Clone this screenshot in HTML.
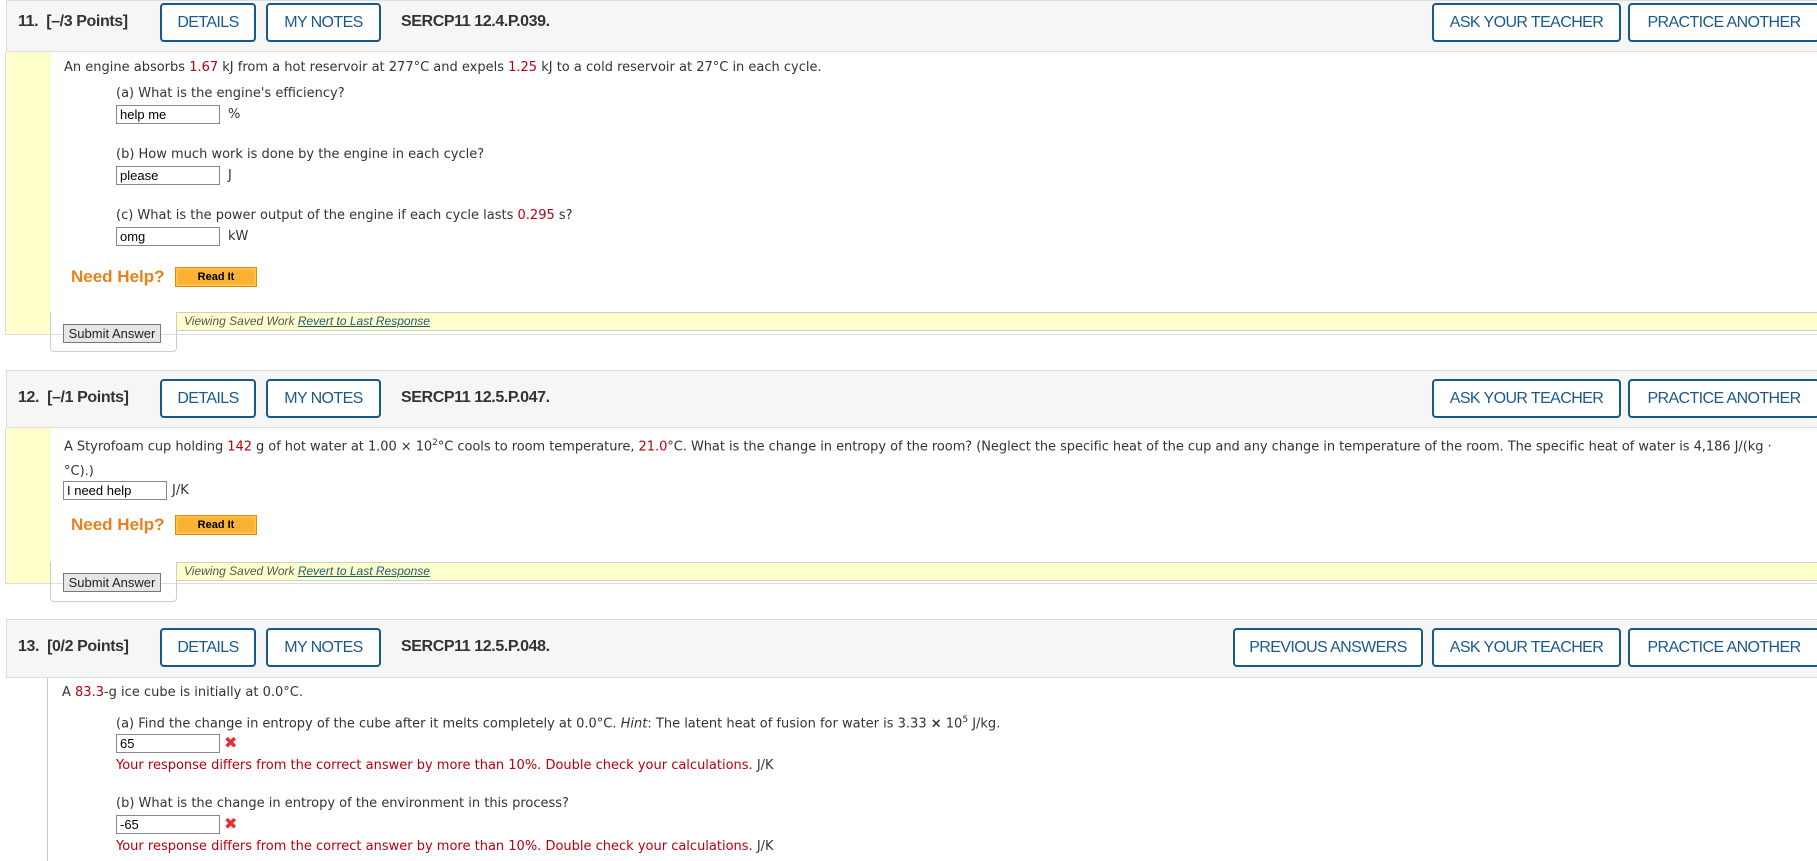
<!DOCTYPE html>
<html><head><meta charset="utf-8"><style>
*{margin:0;padding:0;box-sizing:border-box}
body{width:1817px;height:861px;overflow:hidden;background:#fff;position:relative;font-family:"DejaVu Sans",Verdana,sans-serif;font-size:13px;color:#333}
.a{position:absolute;white-space:nowrap}
.hdr{position:absolute;left:6px;width:1811px;background:#f6f6f6;border:1px solid #ddd;border-right:none}
.btn{position:absolute;border:2px solid #155a8a;border-radius:4px;background:#fff;color:#1a5a8a;font-family:"Liberation Sans",sans-serif;font-size:16px;display:flex;align-items:center;justify-content:center;letter-spacing:-0.6px}
.ht{position:absolute;font-family:"Liberation Sans",sans-serif;font-weight:bold;font-size:16px;color:#333;letter-spacing:-0.4px}
.yel{position:absolute;left:5px;width:46px;background:#ffffcc;border:1px solid #ddd;border-right:none;border-top:none}
.yb{position:absolute;left:51px;width:1766px;border-bottom:1px solid #ddd}
.r{color:#b8000d}
.inp{position:absolute;width:104px;height:19px;border:1px solid #888;font-family:"Liberation Sans",sans-serif;font-size:13px;padding-left:3px;line-height:17px;color:#000}
.nh{position:absolute;font-family:"Liberation Sans",sans-serif;font-weight:bold;font-size:17px;color:#e8811a}
.ri{position:absolute;width:82px;height:20px;background:#f9b233;border:1px solid #e08a10;box-shadow:inset 0 0 0 2px #fbc24a;font-family:"Liberation Sans",sans-serif;font-weight:bold;font-size:11px;color:#000;text-align:center;line-height:18px}
.vw{position:absolute;left:176px;width:1641px;height:19px;background:#ffffcc;border:1px solid #ccc;border-right:none;font-family:"Liberation Sans",sans-serif;font-style:italic;font-size:12px;color:#555;padding-left:7px;line-height:16px}
.vw u{color:#1a5a7a}
.sb{position:absolute;left:63px;width:98px;height:19px;background:#e6e6e6;border:1px solid #777;font-family:"Liberation Sans",sans-serif;font-size:13px;color:#222;text-align:center;line-height:17px}
.sbox{position:absolute;left:50px;width:127px;border:1px solid #ccc;border-top:none;border-radius:0 0 4px 4px}
.x{color:#e03030;font-weight:bold;font-size:16px}
</style></head><body>

<!-- Q11 -->
<div class="hdr" style="top:0;height:52px"></div>
<div class="ht" style="left:18px;top:13px">11.&nbsp; [–/3 Points]</div>
<div class="btn" style="left:160px;top:3px;width:96px;height:39px">DETAILS</div>
<div class="btn" style="left:266px;top:3px;width:115px;height:39px">MY NOTES</div>
<div class="ht" style="left:401px;top:13px">SERCP11 12.4.P.039.</div>
<div class="btn" style="left:1432px;top:3px;width:189px;height:39px">ASK YOUR TEACHER</div>
<div class="btn" style="left:1628px;top:3px;width:192px;height:39px">PRACTICE ANOTHER</div>
<div class="yel" style="top:52px;height:283px"></div>
<div class="yb" style="top:52px;height:283px"></div>
<div class="sbox" style="top:312px;height:40px"></div>
<div class="a" style="left:64px;top:60px">An engine absorbs <span class="r">1.67</span> kJ from a hot reservoir at 277°C and expels <span class="r">1.25</span> kJ to a cold reservoir at 27°C in each cycle.</div>
<div class="a" style="left:116px;top:86px">(a) What is the engine's efficiency?</div>
<div class="inp" style="left:116px;top:105px">help me</div><div class="a" style="left:228px;top:107px">%</div>
<div class="a" style="left:116px;top:147px">(b) How much work is done by the engine in each cycle?</div>
<div class="inp" style="left:116px;top:166px">please</div><div class="a" style="left:228px;top:168px">J</div>
<div class="a" style="left:116px;top:208px">(c) What is the power output of the engine if each cycle lasts <span class="r">0.295</span> s?</div>
<div class="inp" style="left:116px;top:227px">omg</div><div class="a" style="left:228px;top:229px">kW</div>
<div class="nh" style="left:71px;top:267px">Need Help?</div>
<div class="ri" style="left:175px;top:267px">Read It</div>
<div class="vw" style="top:312px">Viewing Saved Work <u>Revert to Last Response</u></div>
<div class="sb" style="top:324px">Submit Answer</div>

<!-- Q12 -->
<div class="hdr" style="top:370px;height:58px"></div>
<div class="ht" style="left:18px;top:389px">12.&nbsp; [–/1 Points]</div>
<div class="btn" style="left:160px;top:379px;width:96px;height:39px">DETAILS</div>
<div class="btn" style="left:266px;top:379px;width:115px;height:39px">MY NOTES</div>
<div class="ht" style="left:401px;top:389px">SERCP11 12.5.P.047.</div>
<div class="btn" style="left:1432px;top:379px;width:189px;height:39px">ASK YOUR TEACHER</div>
<div class="btn" style="left:1628px;top:379px;width:192px;height:39px">PRACTICE ANOTHER</div>
<div class="yel" style="top:428px;height:156px"></div>
<div class="yb" style="top:428px;height:156px"></div>
<div class="sbox" style="top:562px;height:40px"></div>
<div class="a" style="left:64px;top:438px;letter-spacing:-0.05px">A Styrofoam cup holding <span class="r">142</span> g of hot water at 1.00 × 10<sup style="font-size:9px">2</sup>°C cools to room temperature, <span class="r">21.0</span>°C. What is the change in entropy of the room? (Neglect the specific heat of the cup and any change in temperature of the room. The specific heat of water is 4,186 J/(kg ·</div>
<div class="a" style="left:64px;top:464px">°C).)</div>
<div class="inp" style="left:63px;top:481px">I need help</div><div class="a" style="left:172px;top:483px">J/K</div>
<div class="nh" style="left:71px;top:515px">Need Help?</div>
<div class="ri" style="left:175px;top:515px">Read It</div>
<div class="vw" style="top:562px">Viewing Saved Work <u>Revert to Last Response</u></div>
<div class="sb" style="top:573px">Submit Answer</div>

<!-- Q13 -->
<div class="hdr" style="top:619px;height:59px"></div>
<div class="ht" style="left:18px;top:638px">13.&nbsp; [0/2 Points]</div>
<div class="btn" style="left:160px;top:628px;width:96px;height:39px">DETAILS</div>
<div class="btn" style="left:266px;top:628px;width:115px;height:39px">MY NOTES</div>
<div class="ht" style="left:401px;top:638px">SERCP11 12.5.P.048.</div>
<div class="btn" style="left:1233px;top:628px;width:190px;height:39px">PREVIOUS ANSWERS</div>
<div class="btn" style="left:1432px;top:628px;width:189px;height:39px">ASK YOUR TEACHER</div>
<div class="btn" style="left:1628px;top:628px;width:192px;height:39px">PRACTICE ANOTHER</div>
<div style="position:absolute;left:47px;top:678px;width:1px;height:183px;background:#ccc"></div>
<div class="a" style="left:62px;top:685px">A <span class="r">83.3</span>-g ice cube is initially at 0.0°C.</div>
<div class="a" style="left:116px;top:715px">(a) Find the change in entropy of the cube after it melts completely at 0.0°C. <i>Hint</i>: The latent heat of fusion for water is 3.33 <b>×</b> 10<sup style="font-size:9px">5</sup> J/kg.</div>
<div class="inp" style="left:116px;top:734px">65</div><div class="a x" style="left:224px;top:733px">✖</div>
<div class="a r" style="left:116px;top:758px">Your response differs from the correct answer by more than 10%. Double check your calculations. <span style="color:#333">J/K</span></div>
<div class="a" style="left:116px;top:796px">(b) What is the change in entropy of the environment in this process?</div>
<div class="inp" style="left:116px;top:815px">-65</div><div class="a x" style="left:224px;top:814px">✖</div>
<div class="a r" style="left:116px;top:839px">Your response differs from the correct answer by more than 10%. Double check your calculations. <span style="color:#333">J/K</span></div>
</body></html>
